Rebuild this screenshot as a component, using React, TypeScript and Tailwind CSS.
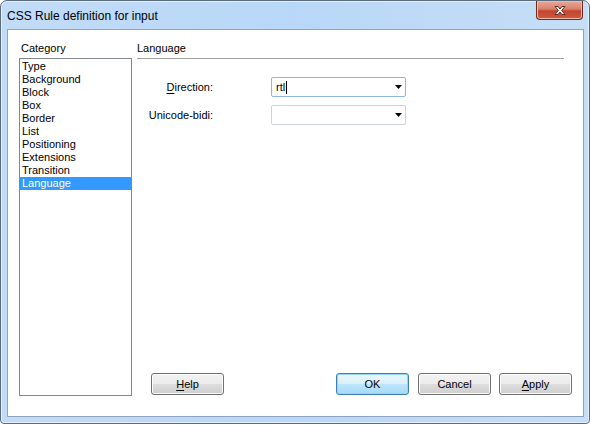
const CATEGORIES = [
  "Type",
  "Background",
  "Block",
  "Box",
  "Border",
  "List",
  "Positioning",
  "Extensions",
  "Transition",
  "Language",
];

const FONT = "font-['Tahoma','Liberation_Sans',Arial,sans-serif]";

function Arrow() {
  return (
    <svg width="7" height="4" viewBox="0 0 7 4" className="shrink-0">
      <path d="M0 0h7L3.5 4z" fill="#000" />
    </svg>
  );
}

function Combo({ value, focused }: { value?: string; focused?: boolean }) {
  return (
    <div
      className={`flex items-center w-[135px] h-[20px] border rounded-[2px] bg-white pl-[4px] pr-[3px] ${
        focused ? "border-[#8fb6e0]" : "border-[#cdd3da]"
      }`}
    >
      <span className="flex-1 flex items-center text-[11px] leading-none">
        {value}
        {focused && <span className="inline-block w-px h-[13px] bg-black ml-px" />}
      </span>
      <Arrow />
    </div>
  );
}

function Button({
  label,
  mnemonic,
  primary,
}: {
  label: string;
  mnemonic?: boolean;
  primary?: boolean;
}) {
  const first = mnemonic ? label.slice(0, 1) : "";
  const rest = mnemonic ? label.slice(1) : label;
  return (
    <button
      className={`w-[73px] h-[22px] rounded-[3px] border text-[11px] leading-none text-black ${
        primary
          ? "border-[#3c7fb1] bg-[linear-gradient(#eaf6fd_0%,#d9f0fc_50%,#bee6fd_50%,#a7d9f5_100%)] shadow-[inset_0_0_0_1px_#94d6f5]"
          : "border-[#707070] bg-[linear-gradient(#f2f2f2_0%,#ebebeb_50%,#dddddd_50%,#cfcfcf_100%)] shadow-[inset_0_0_0_1px_#fcfcfc]"
      }`}
    >
      {first && <span className="underline underline-offset-2">{first}</span>}
      {rest}
    </button>
  );
}

export default function App() {
  return (
    <div className={`w-[590px] h-[425px] bg-white ${FONT}`}>
      <div className="relative w-[590px] h-[424px] flex flex-col rounded-t-[7px] rounded-b-[4px] border border-[#5b6b7e] bg-[linear-gradient(90deg,#c2dcf7_0%,#b9d7f8_50%,#c6def6_100%)] shadow-[inset_0_0_0_1px_#e6f0fb]">
        {/* title bar */}
        <div className="h-[28px] flex items-center pl-[6px] pt-[1px] text-[12px] text-black">
          CSS Rule definition for input
        </div>
        <div className="absolute top-0 right-[6px] w-[47px] h-[19px] rounded-b-[4px] border border-t-0 border-[#6d2c22] bg-[linear-gradient(#e9a99b_0%,#d8806c_45%,#c4452e_55%,#cf5a3f_100%)] shadow-[inset_0_0_0_1px_#f0b8a8] flex items-center justify-center">
          <svg width="14" height="11" viewBox="0 0 14 11">
            <path
              d="M2 1.5h3l2 2.5 2-2.5h3L8.6 5.5 12 9.5H9L7 7 5 9.5H2l3.4-4z"
              fill="#fff"
              stroke="#4a1f18"
              strokeWidth="0.9"
              strokeLinejoin="round"
            />
          </svg>
        </div>

        {/* client area */}
        <div className="ml-[6px] mr-[5px] mb-[6px] h-[388px] border border-[#8fa3bd] bg-white flex pl-[11px] pr-[11px] pt-[12px] pb-[20px] text-[11px] text-black">
          <div className="w-[113px] flex flex-col">
            <div className="h-[16px] leading-[13px] pl-[2px]">Category</div>
            <div className="h-[338px] border border-[#828790] flex flex-col pt-[1px]">
              {CATEGORIES.map((c) => (
                <div
                  key={c}
                  className={`h-[13px] leading-[13px] pl-[2px] ${
                    c === "Language" ? "bg-[#3399ff] text-white" : ""
                  }`}
                >
                  {c}
                </div>
              ))}
            </div>
          </div>

          <div className="flex-1 ml-[5px] flex flex-col">
            <div className="h-[17px] leading-[13px] mr-[8px] border-b border-[#a0a0a0]">
              Language
            </div>
            <div className="mt-[18px] flex items-center h-[20px]">
              <div className="w-[76px] text-right">
                <span className="underline underline-offset-2">D</span>irection:
              </div>
              <div className="ml-[58px]">
                <Combo value="rtl" focused />
              </div>
            </div>
            <div className="mt-[8px] flex items-center h-[20px]">
              <div className="w-[76px] text-right">Unicode-bidi:</div>
              <div className="ml-[58px]">
                <Combo />
              </div>
            </div>

            <div className="flex-1" />

            <div className="flex items-center mb-[1px] pl-[14px]">
              <Button label="Help" mnemonic />
              <div className="ml-auto flex gap-[9px]">
                <Button label="OK" primary />
                <div className="flex gap-[8px]">
                  <Button label="Cancel" />
                  <Button label="Apply" mnemonic />
                </div>
              </div>
            </div>
          </div>
        </div>
      </div>
    </div>
  );
}
